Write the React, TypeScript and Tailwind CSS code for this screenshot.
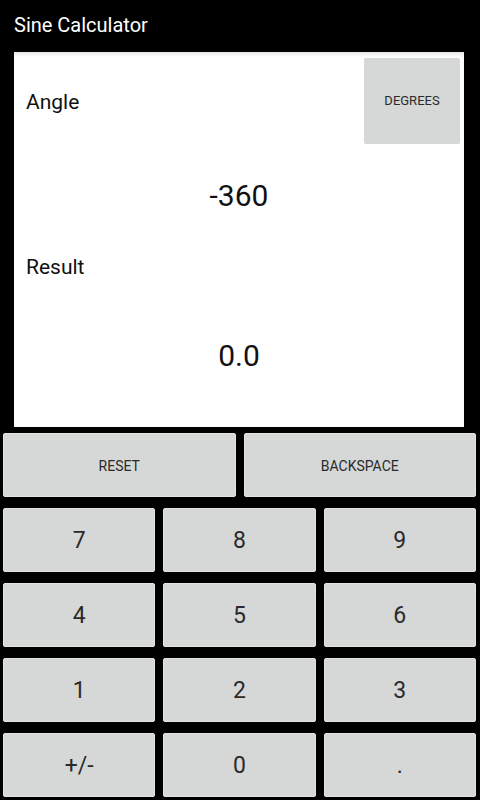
import { useState } from "react";

const Key = ({
  label,
  size = "text-[23px]",
  onPress,
}: {
  label: string;
  size?: string;
  onPress?: () => void;
}) => {
  return (
    <button
      onClick={onPress}
      className={`flex-1 h-[64px] pt-[3px] rounded-[2px] bg-[#d6d7d7] border border-[#e2e3e3] text-[#2a2a2a] flex items-center justify-center ${size}`}
    >
      {label}
    </button>
  );
};

const App = () => {
  const [angle, setAngle] = useState("-360");
  const [degrees, setDegrees] = useState(true);

  const value = parseFloat(angle);
  const rad = degrees ? (value * Math.PI) / 180 : value;
  const sine = Math.round(Math.sin(rad) * 1e10) / 1e10;
  const result = isNaN(sine) ? "" : (sine === 0 ? 0 : sine).toFixed(1);

  const press = (k: string) => {
    if (k === "+/-") {
      setAngle(angle.startsWith("-") ? angle.slice(1) : "-" + angle);
    } else if (k === ".") {
      if (!angle.includes(".")) setAngle(angle + ".");
    } else {
      setAngle(angle === "0" ? k : angle + k);
    }
  };

  const rows = [
    ["7", "8", "9"],
    ["4", "5", "6"],
    ["1", "2", "3"],
    ["+/-", "0", "."],
  ];

  return (
    <div className="w-[480px] h-[800px] bg-black flex flex-col font-['Roboto',sans-serif] overflow-hidden">
      <div className="h-[52px] pl-[14px] pb-[3px] flex items-center text-white text-[20px]">
        Sine Calculator
      </div>

      <div className="ml-[14px] mr-[16px] h-[375px] bg-white flex flex-col text-[#111] shadow-[inset_0_4px_4px_-2px_rgba(0,0,0,0.12)]">
        <div className="h-[98px] flex items-center justify-between pl-[12px] pr-[4px]">
          <span className="text-[21px] mt-[3px]">Angle</span>
          <button
            onClick={() => setDegrees(!degrees)}
            className="w-[96px] h-[86px] rounded-[2px] bg-[#d6d7d7] text-[13px] text-[#2a2a2a]"
          >
            {degrees ? "DEGREES" : "RADIANS"}
          </button>
        </div>
        <div className="h-[90px] flex items-center justify-center text-[30px]">
          {angle}
        </div>
        <div className="h-[54px] pt-[2px] flex items-center pl-[12px] text-[21px]">
          Result
        </div>
        <div className="h-[122px] flex items-center justify-center text-[30px]">
          {result}
        </div>
      </div>

      <div className="flex flex-col gap-[11px] pt-[6px] pl-[3px] pr-[4px]">
        <div className="flex gap-[8px]">
          <Key label="RESET" size="text-[14px]" onPress={() => setAngle("0")} />
          <Key
            label="BACKSPACE"
            size="text-[14px]"
            onPress={() => setAngle(angle.length > 1 ? angle.slice(0, -1) : "0")}
          />
        </div>
        {rows.map((row, i) => (
          <div key={i} className="flex gap-[8px]">
            {row.map((k) => (
              <Key key={k} label={k} onPress={() => press(k)} />
            ))}
          </div>
        ))}
      </div>
    </div>
  );
};

export default App;
